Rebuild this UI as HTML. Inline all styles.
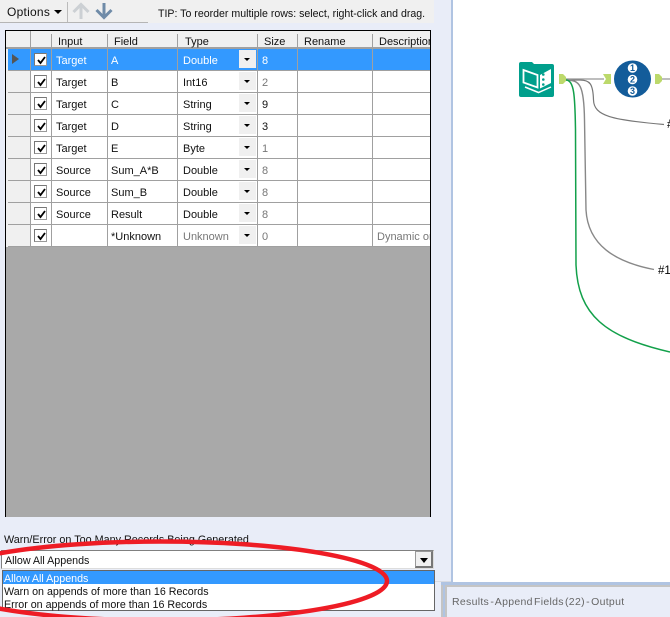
<!DOCTYPE html>
<html><head><meta charset="utf-8"><style>
html,body{margin:0;padding:0;background:#e9edf8}
#p{position:relative;width:670px;height:617px;overflow:hidden;background:#e9edf8;font:11px "Liberation Sans",sans-serif;color:#111}
#p div{position:absolute;box-sizing:border-box}
.t{white-space:nowrap;line-height:14px;margin-top:1px}
.g{color:#777}
.ck{width:13px;height:13px;background:#fff;border:1px solid #999;border-top-color:#777;border-left-color:#777;left:34px}
.ck svg{position:absolute;left:1px;top:1px}
.dd{left:239px;width:17px;height:18px;background:#f0f0f0}
.dd:after{content:"";position:absolute;left:5px;top:8px;border:3px solid transparent;border-top:3px solid #000;border-bottom:0}
</style></head><body><div id="p">
<div style="left:0;top:0;width:148px;height:23px;background:#f0f0f0;border-bottom:1px solid #b5b5b5"></div>
<div style="left:148px;top:0;width:286px;height:23px;background:#f0f0f0"></div>
<div class="t" style="left:7px;top:4px;font-size:12px;letter-spacing:.25px">Options</div>
<div style="left:54px;top:10px;width:0;height:0;border:4px solid transparent;border-top:4px solid #000;border-bottom:0"></div>
<div style="left:67px;top:2px;width:1px;height:20px;background:#bbb"></div>
<svg style="position:absolute;left:72px;top:2px" width="44" height="18" viewBox="0 0 44 18"><path d="M9 17V3M1.500 10L9 2.500L16.500 10" fill="none" stroke="#ccd0d4" stroke-width="3"/><path d="M32 1V15M24.500 8L32 15.500L39.500 8" fill="none" stroke="#6f8ba8" stroke-width="3"/></svg>
<div class="t" style="left:158px;top:6px;font-size:10.600px">TIP: To reorder multiple rows: select, right-click and drag.</div>

<div style="left:5px;top:30px;width:426px;height:487px;background:#a9a9a9;border:1px solid #000;border-width:1px 1px 0 1px;border-top-color:#000"></div>
<div style="left:6px;top:31px;width:424px;height:18px;background:#f0f0f0;border-bottom:2px solid #a0a0a0"></div>
<div style="left:6px;top:49px;width:24px;height:198px;background:#f0f0f0"></div>
<div style="left:30px;top:49px;width:400px;height:198px;background:#fff"></div>
<div style="left:8px;top:49px;width:422px;height:22px;background:#3399ff"></div>
<div style="left:12px;top:54px;width:0;height:0;border:5px solid transparent;border-left:7px solid #555;border-right:0"></div>

<svg style="position:absolute;left:0;top:0" width="440" height="250">
<g stroke="#a0a0a0" stroke-width="1" shape-rendering="crispEdges">
<path d="M8 70.500H430M8 92.500H430M8 114.500H430M8 136.500H430M8 158.500H430M8 180.500H430M8 202.500H430M8 224.500H430M8 246.500H430"/>
<path d="M30.500 31V247M51.500 49V247M107.500 49V247M177.500 49V247M257.500 49V247M297.500 49V247M372.500 49V247"/>
<path d="M51.500 34V47M107.500 34V47M177.500 34V47M257.500 34V47M297.500 34V47M372.500 34V47"/>
</g></svg>

<div class="t" style="left:58px;top:34px">Input</div>
<div class="t" style="left:114px;top:34px">Field</div>
<div class="t" style="left:185px;top:34px">Type</div>
<div class="t" style="left:264px;top:34px">Size</div>
<div class="t" style="left:304px;top:34px">Rename</div>
<div class="t" style="left:379px;top:34px;width:51px;overflow:hidden">Description</div>

<div class="ck" style="top:53px"><svg width="11" height="11"><path d="M2 5L4.500 8L9 2" fill="none" stroke="#000" stroke-width="1.800"/></svg></div>
<div class="ck" style="top:75px"><svg width="11" height="11"><path d="M2 5L4.500 8L9 2" fill="none" stroke="#000" stroke-width="1.800"/></svg></div>
<div class="ck" style="top:97px"><svg width="11" height="11"><path d="M2 5L4.500 8L9 2" fill="none" stroke="#000" stroke-width="1.800"/></svg></div>
<div class="ck" style="top:119px"><svg width="11" height="11"><path d="M2 5L4.500 8L9 2" fill="none" stroke="#000" stroke-width="1.800"/></svg></div>
<div class="ck" style="top:141px"><svg width="11" height="11"><path d="M2 5L4.500 8L9 2" fill="none" stroke="#000" stroke-width="1.800"/></svg></div>
<div class="ck" style="top:163px"><svg width="11" height="11"><path d="M2 5L4.500 8L9 2" fill="none" stroke="#000" stroke-width="1.800"/></svg></div>
<div class="ck" style="top:185px"><svg width="11" height="11"><path d="M2 5L4.500 8L9 2" fill="none" stroke="#000" stroke-width="1.800"/></svg></div>
<div class="ck" style="top:207px"><svg width="11" height="11"><path d="M2 5L4.500 8L9 2" fill="none" stroke="#000" stroke-width="1.800"/></svg></div>
<div class="ck" style="top:229px"><svg width="11" height="11"><path d="M2 5L4.500 8L9 2" fill="none" stroke="#000" stroke-width="1.800"/></svg></div>

<div class="t" style="left:56px;top:53px;color:#fff">Target</div><div class="t" style="left:111px;top:53px;color:#fff">A</div><div class="t" style="left:183px;top:53px;color:#fff">Double</div><div class="t" style="left:262px;top:53px;color:#fff">8</div>
<div class="t" style="left:56px;top:75px">Target</div><div class="t" style="left:111px;top:75px">B</div><div class="t" style="left:183px;top:75px">Int16</div><div class="t g" style="left:262px;top:75px">2</div>
<div class="t" style="left:56px;top:97px">Target</div><div class="t" style="left:111px;top:97px">C</div><div class="t" style="left:183px;top:97px">String</div><div class="t" style="left:262px;top:97px">9</div>
<div class="t" style="left:56px;top:119px">Target</div><div class="t" style="left:111px;top:119px">D</div><div class="t" style="left:183px;top:119px">String</div><div class="t" style="left:262px;top:119px">3</div>
<div class="t" style="left:56px;top:141px">Target</div><div class="t" style="left:111px;top:141px">E</div><div class="t" style="left:183px;top:141px">Byte</div><div class="t g" style="left:262px;top:141px">1</div>
<div class="t" style="left:56px;top:163px">Source</div><div class="t" style="left:111px;top:163px">Sum_A*B</div><div class="t" style="left:183px;top:163px">Double</div><div class="t g" style="left:262px;top:163px">8</div>
<div class="t" style="left:56px;top:185px">Source</div><div class="t" style="left:111px;top:185px">Sum_B</div><div class="t" style="left:183px;top:185px">Double</div><div class="t g" style="left:262px;top:185px">8</div>
<div class="t" style="left:56px;top:207px">Source</div><div class="t" style="left:111px;top:207px">Result</div><div class="t" style="left:183px;top:207px">Double</div><div class="t g" style="left:262px;top:207px">8</div>
<div class="t" style="left:111px;top:229px">*Unknown</div><div class="t g" style="left:183px;top:229px">Unknown</div><div class="t g" style="left:262px;top:229px">0</div><div class="t g" style="left:377px;top:229px;width:53px;overflow:hidden">Dynamic or</div>

<div class="dd" style="top:50px"></div><div class="dd" style="top:72px"></div><div class="dd" style="top:94px"></div><div class="dd" style="top:116px"></div><div class="dd" style="top:138px"></div><div class="dd" style="top:160px"></div><div class="dd" style="top:182px"></div><div class="dd" style="top:204px"></div><div class="dd" style="top:226px"></div>

<div style="left:453px;top:0;width:217px;height:582px;background:#fff"></div>
<div style="left:451px;top:0;width:2px;height:582px;background:#b0c4e2"></div>
<div style="left:435px;top:581px;width:16px;height:1px;background:#d8dbe2"></div>
<div style="left:441px;top:582px;width:229px;height:3px;background:#b0c4e2"></div>
<div style="left:441px;top:585px;width:2px;height:32px;background:#c4c4c4"></div>
<div style="left:443px;top:585px;width:2px;height:32px;background:#b0c4e2"></div>
<div style="left:445px;top:585px;width:225px;height:32px;background:#e9edf8;border-left:2px solid #c4c4c4;border-top:2px solid #c4c4c4"></div>
<div class="t" style="left:452px;top:594px;font-size:10.500px;color:#666;letter-spacing:.3px;word-spacing:-2px">Results - Append Fields (22) - Output</div>

<div class="t" style="left:4px;top:532px;font-size:10.800px">Warn/Error on Too Many Records Being Generated</div>
<div style="left:1px;top:550px;width:433px;height:19px;background:#fff;border:1px solid #808080;border-right-color:#ddd;border-bottom-color:#ddd"></div>
<div class="t" style="left:5px;top:553px;font-size:10.700px">Allow All Appends</div>
<div style="left:415px;top:551px;width:18px;height:17px;background:#f0f0f0;border:1px solid #999;border-right:2px solid #777;border-bottom:2px solid #777"></div>
<div style="left:420px;top:558px;width:0;height:0;border:4px solid transparent;border-top:5px solid #000;border-bottom:0"></div>
<div style="left:2px;top:570px;width:433px;height:41px;background:#fff;border:1px solid #666"></div>
<div style="left:3px;top:571px;width:431px;height:13px;background:#3399ff"></div>
<div class="t" style="left:4px;top:571px;color:#fff;font-size:10.700px">Allow All Appends</div>
<div class="t" style="left:4px;top:584px;font-size:10.700px">Warn on appends of more than 16 Records</div>
<div class="t" style="left:4px;top:597px;font-size:10.700px">Error on appends of more than 16 Records</div>

<svg style="position:absolute;left:453px;top:0" width="217" height="582" viewBox="453 0 217 582">
<path d="M566 79H604M662 79H670" stroke="#a8a8a8" stroke-width="1.500" fill="none"/>
<path d="M566 80H580C590 80 593 84 593.500 100C594 116 612 120 664 124.500" stroke="#777" stroke-width="1.200" fill="none"/>
<path d="M566 80C580 80 584 85 584.500 120L586 210C588 245 615 262 654 269.500" stroke="#888" stroke-width="1.400" fill="none"/>
<path d="M566 80C574 80 575 95 575.500 130L576 265C578 315 605 337 670 352" stroke="#12a04a" stroke-width="1.500" fill="none"/>
<path d="M521 62H532L534 64H552Q554 64 554 66V95Q554 97 552 97H521Q519 97 519 95V64Q519 62 521 62Z" fill="#009f8c"/>
<path d="M523.500 70L537.500 75V87.500L523.500 82.500Z" fill="none" stroke="#fff" stroke-width="1.800"/>
<path d="M540 75L551 69V83L540 88.500Z" fill="#fff"/>
<circle cx="543.300" cy="74.500" r="1.300" fill="#009f8c"/><circle cx="543.300" cy="79.500" r="1.300" fill="#009f8c"/><circle cx="543.300" cy="84.500" r="1.300" fill="#009f8c"/>
<path d="M525 87L538.500 92.500L551 87" fill="none" stroke="#fff" stroke-width="1.500"/>
<path d="M559 74H563L566 77V81L563 84H559Z" fill="#bcd96b"/>
<path d="M603 74H611V84H603L606 79Z" fill="#bcd96b"/>
<circle cx="632.500" cy="79" r="18.500" fill="#135c9a"/>
<circle cx="632.500" cy="68" r="4.800" fill="#fff"/><circle cx="632.500" cy="79.500" r="4.800" fill="#fff"/><circle cx="632.500" cy="91" r="4.800" fill="#fff"/>
<text x="632.500" y="71.200" font-family="Liberation Sans" font-size="9" font-weight="bold" fill="#135c9a" text-anchor="middle">1</text>
<text x="632.500" y="82.700" font-family="Liberation Sans" font-size="9" font-weight="bold" fill="#135c9a" text-anchor="middle">2</text>
<text x="632.500" y="94.200" font-family="Liberation Sans" font-size="9" font-weight="bold" fill="#135c9a" text-anchor="middle">3</text>
<path d="M655 74H659L662 77V81L659 84H655Z" fill="#bcd96b"/>
<text x="667" y="128" font-family="Liberation Sans" font-size="11.500" fill="#000">#</text>
<text x="658" y="274" font-family="Liberation Sans" font-size="11.500" fill="#000">#1</text>
</svg>

<svg style="position:absolute;left:0;top:0" width="670" height="617"><ellipse cx="161" cy="581" rx="226" ry="39.500" fill="none" stroke="#ee1c25" stroke-width="4.500"/></svg>
</div></body></html>
